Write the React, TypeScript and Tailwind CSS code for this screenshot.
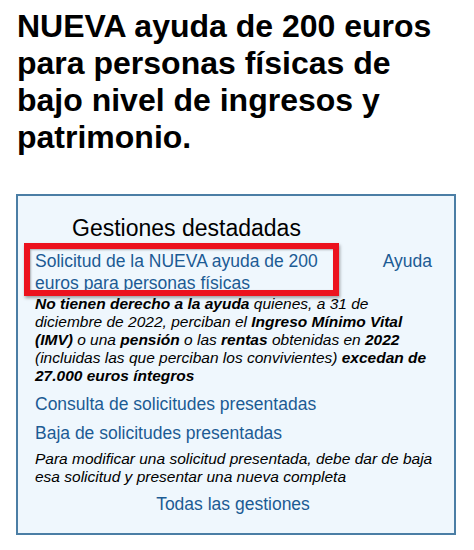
export default function App() {
  return (
    <div className="min-h-[550px] bg-white font-['Liberation_Sans',Arial,sans-serif] text-black">
      <h1 className="ml-[17px] w-[440px] pt-[8px] text-[32px] font-bold leading-[37px]">
        NUEVA ayuda de 200 euros para personas físicas de bajo nivel de ingresos y patrimonio.
      </h1>

      <section className="ml-[16px] mt-[38px] w-[440px] border-2 border-[#4b7ea5] bg-[#eff7fd] pb-[16px] pl-[17px] pr-[20px] pt-[18px]">
        <h2 className="pl-[37px] text-[23px] leading-[28px]">Gestiones destadadas</h2>

        <div className="mt-[8px] flex items-start justify-between">
          <div className="relative w-[300px]">
            <a className="block text-[17.5px] leading-[22px] text-[#1c5b94]">
              Solicitud de la NUEVA ayuda de 200 euros para personas físicas
            </a>
            {/* annotation frame drawn over the link */}
            <div className="pointer-events-none absolute left-[-11px] top-[-7px] h-[53px] w-[315px] border-[6px] border-[#ec121e] shadow-[1px_2px_3px_rgba(0,0,0,0.35),inset_1px_1px_2px_rgba(0,0,0,0.3)]" />
          </div>
          <a className="mr-[2px] text-[17.5px] leading-[22px] text-[#1c5b94]">Ayuda</a>
        </div>

        <p className="mt-[1px] text-[15.5px] italic leading-[18px]">
          <b>No tienen derecho a la ayuda</b> quienes, a 31 de diciembre de 2022, perciban el{" "}
          <b>Ingreso Mínimo Vital (IMV)</b> o una <b>pensión</b> o las <b>rentas</b> obtenidas en{" "}
          <b>2022</b> (incluidas las que perciban los convivientes) <b>excedan de 27.000 euros íntegros</b>
        </p>

        <a className="mt-[8px] block text-[17.5px] leading-[22px] text-[#1c5b94]">
          Consulta de solicitudes presentadas
        </a>
        <a className="mt-[7px] block text-[17.5px] leading-[22px] text-[#1c5b94]">
          Baja de solicitudes presentadas
        </a>
        <p className="mt-[6px] text-[15.5px] italic leading-[18px]">
          Para modificar una solicitud presentada, debe dar de baja esa solicitud y presentar una nueva completa
        </p>

        <div className="mt-[7px] pr-[3px] text-center">
          <a className="text-[17.5px] leading-[22px] text-[#1c5b94]">Todas las gestiones</a>
        </div>
      </section>
    </div>
  );
}
